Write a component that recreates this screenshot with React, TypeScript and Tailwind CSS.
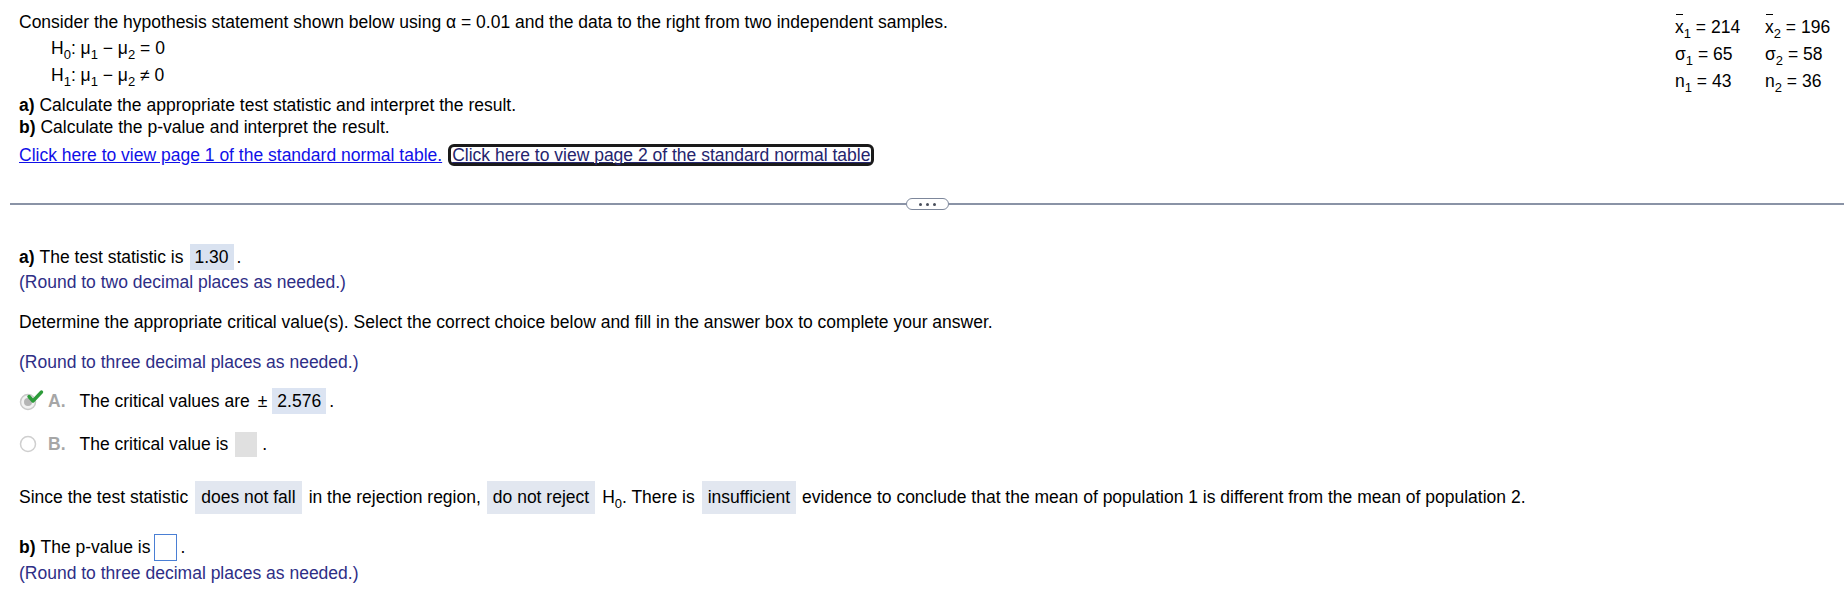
import React from "react";

function Sub({ children }: { children: React.ReactNode }) {
  return <span className="relative top-[5px] text-[13px] leading-none">{children}</span>;
}

function XBar() {
  return (
    <span className="relative inline-block">
      <span className="absolute left-[1px] top-[0px] w-[7px] border-t border-black" />x
    </span>
  );
}

function RadioChecked() {
  return (
    <svg width="28" height="24" viewBox="0 0 28 24" className="shrink-0">
      <circle cx="9" cy="13" r="7.5" fill="#f2f2f2" stroke="#c9c9c9" strokeWidth="1.5" />
      <circle cx="9" cy="13" r="4" fill="#b5b5b5" />
      <path d="M10 7.5 L14 12 L22.5 3" fill="none" stroke="#2d9b3a" strokeWidth="3.4" strokeLinecap="round" strokeLinejoin="round" />
    </svg>
  );
}

function RadioEmpty() {
  return (
    <svg width="28" height="24" viewBox="0 0 28 24" className="shrink-0">
      <circle cx="9" cy="12" r="7.5" fill="#fff" stroke="#cfcfcf" strokeWidth="1.5" />
    </svg>
  );
}

export default function App() {
  return (
    <div className="w-[1844px] h-[590px] overflow-hidden bg-white text-black font-['Liberation_Sans',Arial,sans-serif] text-[17.5px]">
      {/* Top section */}
      <div className="flex justify-between h-[198px] pl-[19px] pt-[9px]">
        <div className="flex flex-col">
          <div className="h-[26px] flex items-center">
            Consider the hypothesis statement shown below using α = 0.01 and the data to the right from two independent samples.
          </div>
          <div className="h-[27px] flex items-center pl-[32px]">
            <span>H<Sub>0</Sub>: μ<Sub>1</Sub> − μ<Sub>2</Sub> = 0</span>
          </div>
          <div className="h-[27px] flex items-center pl-[32px]">
            <span>H<Sub>1</Sub>: μ<Sub>1</Sub> − μ<Sub>2</Sub> ≠ 0</span>
          </div>
          <div className="h-[22px] flex items-center mt-[5px]">
            <span><b>a)</b> Calculate the appropriate test statistic and interpret the result.</span>
          </div>
          <div className="h-[22px] flex items-center">
            <span><b>b)</b> Calculate the p-value and interpret the result.</span>
          </div>
          <div className="h-[22px] flex items-center mt-[6px]">
            <span className="text-[#1010e8] underline">Click here to view page 1 of the standard normal table.</span>
            <span className="ml-[6px] text-[#25256e] underline rounded-[6px] border-[3px] border-[#1a1a1a] px-[1px] leading-[16px]">
              Click here to view page 2 of the standard normal table
            </span>
          </div>
        </div>
        <div className="w-[169px] pt-[5px]">
          <div className="grid grid-cols-[90px_1fr] auto-rows-[27px] items-center">
            <span><XBar /><Sub>1</Sub> = 214</span>
            <span><XBar /><Sub>2</Sub> = 196</span>
            <span>σ<Sub>1</Sub> = 65</span>
            <span>σ<Sub>2</Sub> = 58</span>
            <span>n<Sub>1</Sub> = 43</span>
            <span>n<Sub>2</Sub> = 36</span>
          </div>
        </div>
      </div>

      {/* Separator */}
      <div className="flex items-center h-[12px] ml-[10px]">
        <div className="flex-1 h-[2px] bg-[#8a93a6]" />
        <div className="w-[43px] h-[12px] rounded-full border-[1.5px] border-[#7d879b] bg-white flex items-center justify-center gap-[4px]">
          <span className="w-[3px] h-[3px] rounded-full bg-[#4a4f5c]" />
          <span className="w-[3px] h-[3px] rounded-full bg-[#4a4f5c]" />
          <span className="w-[3px] h-[3px] rounded-full bg-[#4a4f5c]" />
        </div>
        <div className="flex-1 h-[2px] bg-[#8a93a6]" />
      </div>

      {/* Answer section */}
      <div className="pl-[19px] flex flex-col">
        <div className="h-[26px] mt-[34px] flex items-center">
          <b>a)</b>
          <span className="ml-[5px]">The test statistic is</span>
          <span className="ml-[6px] h-[26px] px-[5px] flex items-center bg-[#d9e2f0]">1.30</span>
          <span className="ml-[3px]">.</span>
        </div>
        <div className="h-[24px] flex items-center text-[#2e2e86]">(Round to two decimal places as needed.)</div>
        <div className="h-[24px] mt-[16px] flex items-center">
          Determine the appropriate critical value(s). Select the correct choice below and fill in the answer box to complete your answer.
        </div>
        <div className="h-[24px] mt-[16px] flex items-center text-[#2e2e86]">(Round to three decimal places as needed.)</div>

        <div className="h-[26px] mt-[14px] flex items-center">
          <RadioChecked />
          <span className="text-[#a6a6a6] font-bold ml-[1px]">A.</span>
          <span className="ml-[14px]">The critical values are</span>
          <span className="ml-[8px]">±</span>
          <span className="ml-[5px] h-[26px] px-[5px] flex items-center bg-[#dce4f2]">2.576</span>
          <span className="ml-[3px]">.</span>
        </div>
        <div className="h-[26px] mt-[17px] flex items-center">
          <RadioEmpty />
          <span className="text-[#a6a6a6] font-bold ml-[1px]">B.</span>
          <span className="ml-[14px]">The critical value is</span>
          <span className="ml-[7px] w-[22px] h-[25px] bg-[#e0e0e0]" />
          <span className="ml-[5px]">.</span>
        </div>

        <div className="h-[33px] mt-[24px] flex items-center">
          <span>Since the test statistic</span>
          <span className="ml-[7px] h-[33px] px-[6px] flex items-center bg-[#e2e7f0]">does not fall</span>
          <span className="ml-[7px]">in the rejection region,</span>
          <span className="ml-[6px] h-[33px] px-[6px] flex items-center bg-[#e2e7f0]">do not reject</span>
          <span className="ml-[7px]">H<Sub>0</Sub>. There is</span>
          <span className="ml-[7px] h-[33px] px-[6px] flex items-center bg-[#e2e7f0]">insufficient</span>
          <span className="ml-[6px]">evidence to conclude that the mean of population 1 is different from the mean of population 2.</span>
        </div>

        <div className="h-[27px] mt-[20px] flex items-center">
          <b>b)</b>
          <span className="ml-[5px]">The p-value is</span>
          <span className="ml-[4px] w-[23px] h-[27px] border border-[#4a7fd4] bg-white" />
          <span className="ml-[3px]">.</span>
        </div>
        <div className="h-[24px] flex items-center text-[#2e2e86]">(Round to three decimal places as needed.)</div>
      </div>
    </div>
  );
}
